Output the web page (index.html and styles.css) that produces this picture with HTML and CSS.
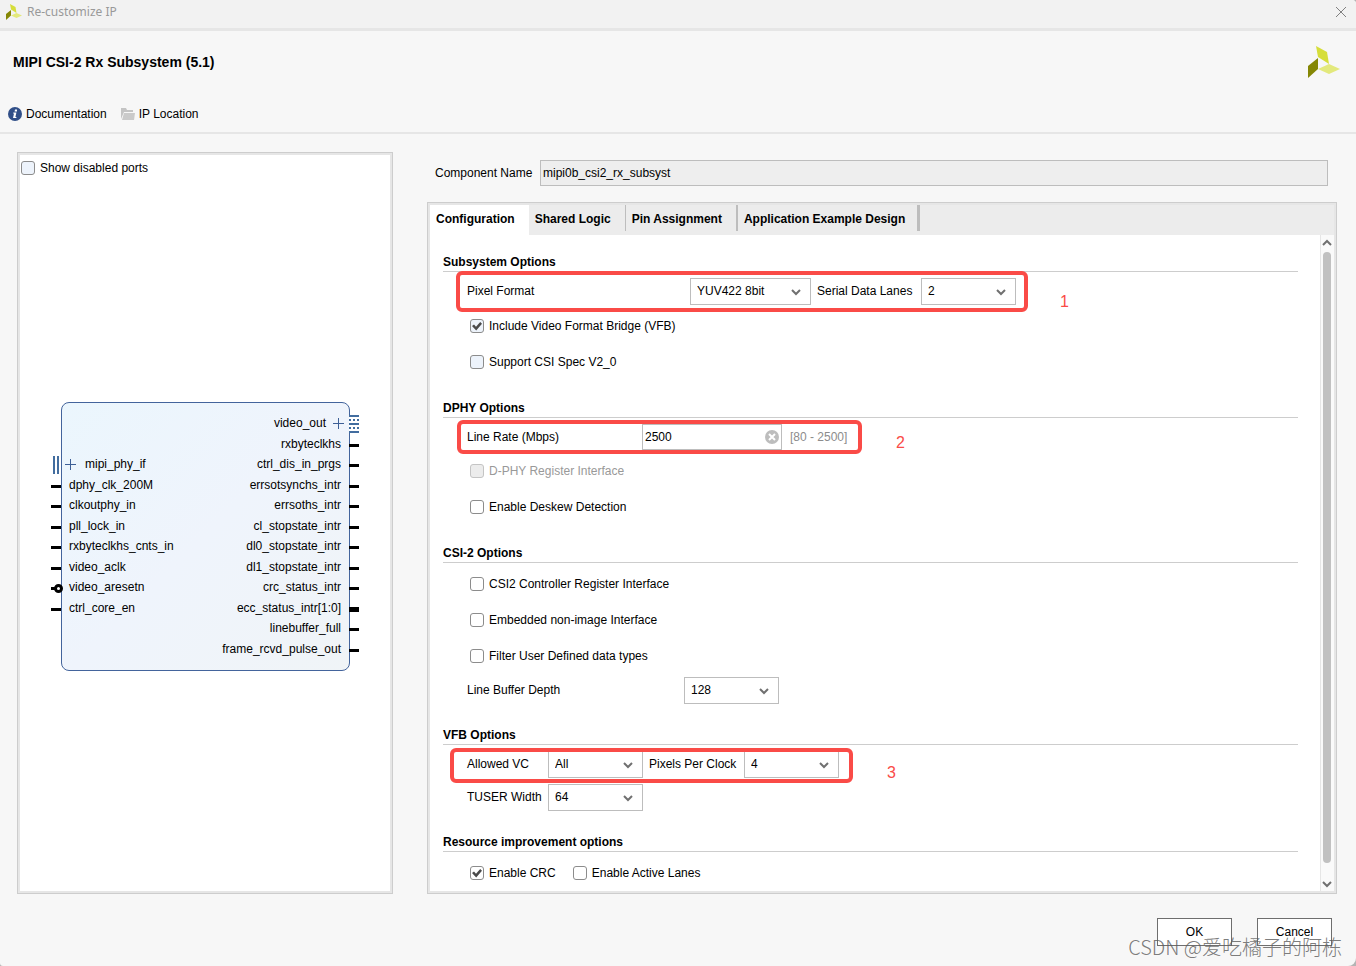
FILE: index.html
```html
<!DOCTYPE html>
<html lang="en">
<head>
    <meta charset="UTF-8">
    <title>Re-customize IP</title>
    <meta name="viewport" content="width=device-width, initial-scale=1.0">
    <link rel="stylesheet" href="styles.css">
</head>
<body>
    <svg class="symbols" aria-hidden="true">
        <symbol id="logo" viewBox="0 0 32 32">
            <path fill="#d6de3a" d="M8 0l11 6 2 12-11-7z"/>
            <path fill="#858705" d="M0 20l10-8v11L0 32z"/>
            <path fill="#e3e97c" d="M10 23l11-5 11 5-11 5z"/>
        </symbol>
        <symbol id="chevron" viewBox="0 0 10 7">
            <path d="M1 1l4 4 4-4" fill="none" stroke="#707070" stroke-width="2"/>
        </symbol>
        <symbol id="plus" viewBox="0 0 11 11">
            <path d="M5.5 0v11M0 5.5h11" stroke="#3d5f96"/>
        </symbol>
    </svg>

    <div class="titlebar">
        <svg class="titlebar-logo"><use href="#logo"/></svg>
        <span>Re-customize IP</span>
        <button class="close" aria-label="Close">
            <svg width="10" height="10" viewBox="0 0 10 10"><path d="M0 0l10 10M10 0L0 10" stroke="#808080"/></svg>
        </button>
    </div>

    <header class="header">
        <div class="header-top">
            <h1>MIPI CSI-2 Rx Subsystem (5.1)</h1>
            <svg class="header-logo"><use href="#logo"/></svg>
        </div>
        <nav class="links">
            <a href="#">
                <svg width="14" height="14" viewBox="0 0 14 14">
                    <circle cx="7" cy="7" r="7" fill="#314f88"/>
                    <path d="M7 2.500h2v2H6.600zM5.400 5.500h3l-1 4.500h1v1H5l1-4.500h-1z" fill="#fff"/>
                </svg>
                Documentation
            </a>
            <a href="#">
                <svg width="14" height="12" viewBox="0 0 14 12">
                    <path d="M0 0h5l1 2h6v2H3L0 11z" fill="#c4c4c4"/>
                    <path d="M3 5h11l-1 7H1z" fill="#cacaca"/>
                </svg>
                IP Location
            </a>
        </nav>
    </header>

    <main class="main">
        <section class="preview">
            <label class="check"><input type="checkbox" class="tinted">Show disabled ports</label>
            <div class="diagram">
                <div class="block">
                    <ul class="ports ports-in">
                        <li class="bus"><svg class="plus"><use href="#plus"/></svg>mipi_phy_if</li>
                        <li>dphy_clk_200M</li>
                        <li>clkoutphy_in</li>
                        <li>pll_lock_in</li>
                        <li>rxbyteclkhs_cnts_in</li>
                        <li>video_aclk</li>
                        <li class="inverted">video_aresetn</li>
                        <li>ctrl_core_en</li>
                    </ul>
                    <ul class="ports ports-out">
                        <li class="bus">video_out<svg class="plus"><use href="#plus"/></svg></li>
                        <li>rxbyteclkhs</li>
                        <li>ctrl_dis_in_prgs</li>
                        <li>errsotsynchs_intr</li>
                        <li>errsoths_intr</li>
                        <li>cl_stopstate_intr</li>
                        <li>dl0_stopstate_intr</li>
                        <li>dl1_stopstate_intr</li>
                        <li>crc_status_intr</li>
                        <li class="wide">ecc_status_intr[1:0]</li>
                        <li>linebuffer_full</li>
                        <li>frame_rcvd_pulse_out</li>
                    </ul>
                </div>
            </div>
        </section>

        <section class="config">
            <div class="component">
                <label for="component-name">Component Name</label>
                <input id="component-name" type="text" value="mipi0b_csi2_rx_subsyst" readonly>
            </div>

            <div class="panel">
                <div class="tabs" role="tablist">
                    <button class="tab active" role="tab" aria-selected="true">Configuration</button>
                    <button class="tab" role="tab">Shared Logic</button>
                    <button class="tab" role="tab">Pin Assignment</button>
                    <button class="tab" role="tab">Application Example Design</button>
                </div>

                <div class="scroll">
                    <form class="options">
                        <fieldset>
                            <h2>Subsystem Options</h2>
                            <div class="field subsystem">
                                <label for="pixel-format">Pixel Format</label>
                                <span class="select wide">
                                    <select id="pixel-format"><option>YUV422 8bit</option></select>
                                    <svg><use href="#chevron"/></svg>
                                </span>
                                <label for="lanes" class="lanes">Serial Data Lanes</label>
                                <span class="select">
                                    <select id="lanes"><option>2</option></select>
                                    <svg><use href="#chevron"/></svg>
                                </span>
                                <span class="mark mark-1"></span>
                                <span class="mark-number number-1">1</span>
                            </div>
                            <div class="checks"><label class="check"><input type="checkbox" class="tinted" checked>Include Video Format Bridge (VFB)</label></div>
                            <div class="checks"><label class="check"><input type="checkbox" class="tinted">Support CSI Spec V2_0</label></div>
                        </fieldset>

                        <fieldset>
                            <h2>DPHY Options</h2>
                            <div class="field dphy">
                                <label for="line-rate">Line Rate (Mbps)</label>
                                <span class="text">
                                    <input id="line-rate" type="text" value="2500">
                                    <button type="button" class="clear" aria-label="Clear">
                                        <svg width="14" height="14" viewBox="0 0 14 14">
                                            <circle cx="7" cy="7" r="7" fill="#bdbdbd"/>
                                            <path d="M4 4l6 6M10 4l-6 6" stroke="#fff" stroke-width="2"/>
                                        </svg>
                                    </button>
                                </span>
                                <span class="range">[80 - 2500]</span>
                                <span class="mark mark-2"></span>
                                <span class="mark-number number-2">2</span>
                            </div>
                            <div class="checks"><label class="check disabled"><input type="checkbox" disabled>D-PHY Register Interface</label></div>
                            <div class="checks"><label class="check"><input type="checkbox">Enable Deskew Detection</label></div>
                        </fieldset>

                        <fieldset>
                            <h2>CSI-2 Options</h2>
                            <div class="checks"><label class="check"><input type="checkbox">CSI2 Controller Register Interface</label></div>
                            <div class="checks"><label class="check"><input type="checkbox">Embedded non-image Interface</label></div>
                            <div class="checks"><label class="check"><input type="checkbox">Filter User Defined data types</label></div>
                            <div class="field csi">
                                <label for="buffer-depth">Line Buffer Depth</label>
                                <span class="select">
                                    <select id="buffer-depth"><option>128</option></select>
                                    <svg><use href="#chevron"/></svg>
                                </span>
                            </div>
                        </fieldset>

                        <fieldset>
                            <h2>VFB Options</h2>
                            <div class="field vfb">
                                <label for="allowed-vc">Allowed VC</label>
                                <span class="select">
                                    <select id="allowed-vc"><option>All</option></select>
                                    <svg><use href="#chevron"/></svg>
                                </span>
                                <label for="pixels-clock" class="pixels">Pixels Per Clock</label>
                                <span class="select">
                                    <select id="pixels-clock"><option>4</option></select>
                                    <svg><use href="#chevron"/></svg>
                                </span>
                                <span class="mark mark-3"></span>
                                <span class="mark-number number-3">3</span>
                            </div>
                            <div class="field vfb">
                                <label for="tuser-width">TUSER Width</label>
                                <span class="select">
                                    <select id="tuser-width"><option>64</option></select>
                                    <svg><use href="#chevron"/></svg>
                                </span>
                            </div>
                        </fieldset>

                        <fieldset>
                            <h2>Resource improvement options</h2>
                            <div class="checks">
                                <label class="check"><input type="checkbox" checked>Enable CRC</label>
                                <label class="check"><input type="checkbox">Enable Active Lanes</label>
                            </div>
                        </fieldset>
                    </form>
                    <div class="scrollbar">
                        <svg class="up"><use href="#chevron"/></svg>
                        <div class="thumb"></div>
                        <svg><use href="#chevron"/></svg>
                    </div>
                </div>
            </div>
        </section>
    </main>

    <footer class="footer">
        <button>OK</button>
        <button>Cancel</button>
    </footer>
    <div class="watermark">CSDN @爱吃橘子的阿栋</div>
</body>
</html>
```
FILE: styles.css
```css
*,
*::before,
*::after {
    box-sizing: border-box;
}

html {
    background: #b4b4b4;
}

body {
    position: relative;
    display: flex;
    flex-direction: column;
    min-height: 100vh;
    margin: 0;
    background: #f7f7f7;
    border-radius: 0 4px 8px 3px;
    overflow: hidden;
    color: #000;
    font: 12px/16px "Liberation Sans", Arial, sans-serif;
}

button,
input,
select {
    margin: 0;
    color: inherit;
    font: inherit;
}

.symbols {
    position: absolute;
    width: 0;
    height: 0;
}

/* title bar */
.titlebar {
    display: flex;
    align-items: center;
    height: 31px;
    padding: 0 10px 4px 6px;
    border-bottom: 3px solid #e6e6e6;
    background: #f2f2f2;
    color: #999;
    font-family: "Noto Sans", "Open Sans", sans-serif;
}

.titlebar-logo {
    width: 16px;
    height: 16px;
    margin-right: 5px;
}

.close {
    display: flex;
    margin-left: auto;
    padding: 0;
    border: none;
    background: none;
}

/* header */
.header {
    padding: 15px 16px 10px 8px;
    border-bottom: 2px solid #e6e6e6;
}

.header-top {
    display: flex;
    align-items: center;
    justify-content: space-between;
    padding-left: 5px;
}

.header-logo {
    width: 32px;
    height: 32px;
}

h1 {
    margin: 0;
    font-size: 14px;
    line-height: 16px;
}

.links {
    display: flex;
    gap: 14px;
    margin-top: 28px;
}

.links a {
    display: flex;
    align-items: center;
    gap: 4px;
    color: #000;
    text-decoration: none;
}

/* main area */
.main {
    flex: 1;
    display: grid;
    grid-template-columns: 376px 1fr;
    gap: 34px;
    padding: 18px 19px 0 17px;
}

.preview,
.panel {
    border: 1px solid #cdcdcd;
    background: #fff;
    box-shadow: inset 0 0 0 2px #e6e6e6;
}

.preview {
    display: flex;
    flex-direction: column;
    padding: 7px 2px 2px 3px;
}

.check {
    display: flex;
    align-items: center;
    gap: 5px;
}

.check.disabled {
    color: #999;
}

.check input {
    appearance: none;
    position: relative;
    width: 14px;
    height: 14px;
    border: 1px solid #8c8c8c;
    border-radius: 3px;
    background: #fff;
}

.check .tinted {
    background: #edf3fb;
}

.check input:disabled {
    border-color: #c4c4c4;
    background: #ececec;
}

.check input:checked::before {
    content: "";
    position: absolute;
    inset: 1px;
    background: #4a4a4a;
    clip-path: polygon(0 50%, 20% 35%, 40% 58%, 82% 10%, 100% 28%, 42% 95%);
}

/* block symbol */
.diagram {
    flex: 1;
    display: flex;
    align-items: center;
    justify-content: center;
    padding-top: 6px;
}

.block {
    display: flex;
    justify-content: space-between;
    width: 289px;
    padding: 10px 8px 11px 7px;
    border: 1px solid #43649c;
    border-radius: 8px;
    background: linear-gradient(135deg, #ebf6fd, #eff4fc 50%, #f0f4f7);
}

.ports {
    display: grid;
    grid-template-rows: repeat(12, 1fr);
    height: 246px;
    margin: 0;
    padding: 0;
    list-style: none;
}

.ports li {
    position: relative;
    display: flex;
    align-items: center;
}

.ports-out li {
    justify-content: flex-end;
}

/* inputs start level with the third output */
.ports-in {
    grid-template-rows: repeat(8, 1fr);
    height: 164px;
    margin-top: 41px;
}

.ports li::before {
    content: "";
    position: absolute;
    top: 10px;
    width: 10px;
    height: 3px;
    background: #000;
}

.ports-in li::before {
    left: -18px;
}

.ports-out li::before {
    right: -18px;
}

.ports .wide::before {
    top: 9px;
    height: 5px;
}

.ports .bus::before {
    top: 2px;
    height: 18px;
}

.ports-in .bus::before {
    left: -16px;
    width: 6px;
    background: linear-gradient(to right, #426d9f 2px, #fff 2px, #fff 4px, #426d9f 4px);
}

.ports-out .bus::before {
    background:
        repeating-linear-gradient(to right, #426d9f 0, #426d9f 2px, #fff 2px, #fff 4px) 0 4px / 10px 2px no-repeat,
        repeating-linear-gradient(to right, #426d9f 0, #426d9f 2px, #fff 2px, #fff 4px) 0 12px / 10px 2px no-repeat,
        repeating-linear-gradient(to bottom, #426d9f 0, #426d9f 2px, #fff 2px, #fff 8px);
}

.plus {
    width: 11px;
    height: 11px;
}

.ports-in .plus {
    margin: 0 9px 0 -4px;
}

.ports-out .plus {
    margin: 0 -3px 0 7px;
}

.ports .inverted::after {
    content: "";
    position: absolute;
    top: 7px;
    left: -15px;
    width: 9px;
    height: 9px;
    border: 3px solid #000;
    border-radius: 50%;
    background: #fff;
}

/* configuration */
.config {
    display: flex;
    flex-direction: column;
    padding-top: 8px;
}

.component {
    display: flex;
    align-items: center;
    gap: 5px;
    margin-bottom: 16px;
    padding: 0 9px 0 8px;
}

.component label {
    min-width: 100px;
}

.component input {
    flex: 1;
    height: 26px;
    padding: 0 2px;
    border: 1px solid #bdbdbd;
    background: #eee;
}

.panel {
    flex: 1;
    display: flex;
    flex-direction: column;
    padding: 2px;
}

.tabs {
    display: flex;
    align-items: flex-start;
    height: 30px;
    background: #ececec;
}

.tab {
    height: 26px;
    padding: 2px 14px 0 6px;
    border: none;
    border-right: 1px solid #bdbdbd;
    background: none;
    font-weight: bold;
}

.tab:nth-child(3) {
    border-right-width: 2px;
}

.tab:nth-child(4) {
    padding-right: 12px;
    border-right-width: 3px;
}

.tab.active {
    height: 30px;
    padding-bottom: 4px;
    border: none;
    background: #fff;
}

.scroll {
    flex: 1;
    display: flex;
}

.options {
    flex: 1;
    padding: 19px 22px 0 13px;
}

fieldset {
    min-width: 0;
    margin: 0 0 20px;
    padding: 0;
    border: none;
}

fieldset:last-child {
    margin-bottom: 0;
}

h2 {
    height: 18px;
    margin: 0 0 3px;
    border-bottom: 1px solid #cdcdcd;
    font-size: 12px;
    line-height: 16px;
}

.field {
    position: relative;
    display: flex;
    align-items: center;
    gap: 6px;
    margin: 6px 0 6px 24px;
}

.field + .checks {
    margin-top: -3px;
}

.checks + .field {
    margin-top: 3px;
}

.field:last-child {
    margin-bottom: 3px;
}

.field label {
    padding-bottom: 2px;
}

.subsystem label:first-child {
    width: 217px;
}

.dphy label {
    width: 169px;
    padding-bottom: 0;
}

.csi label {
    width: 211px;
}

.vfb label:first-child {
    width: 75px;
}

.lanes {
    width: 98px;
}

.pixels {
    width: 89px;
}

.select {
    position: relative;
    display: flex;
    width: 95px;
}

.select.wide {
    width: 121px;
}

.select select {
    appearance: none;
    width: 100%;
    height: 27px;
    padding: 0 6px 2px;
    border: 1px solid #bdbdbd;
    border-radius: 0;
    background: #fff;
}

.select svg {
    position: absolute;
    top: 11px;
    right: 10px;
    width: 10px;
    height: 7px;
    pointer-events: none;
}

.text {
    position: relative;
    display: flex;
    width: 140px;
}

.text input {
    width: 100%;
    height: 26px;
    padding: 0 20px 0 2px;
    border: 1px solid #bdbdbd;
}

.clear {
    position: absolute;
    top: 6px;
    right: 3px;
    display: flex;
    padding: 0;
    border: none;
    background: none;
}

.range {
    padding-left: 2px;
    color: #8c8c8c;
}

.checks {
    display: flex;
    align-items: center;
    gap: 17px;
    height: 36px;
    padding-left: 27px;
}

/* red callouts over the form */
.mark {
    position: absolute;
    border: 4px solid #fa4b47;
    border-radius: 6px;
    pointer-events: none;
}

.mark-1 {
    top: -7px;
    left: -11px;
    width: 572px;
    height: 41px;
}

.mark-2 {
    top: -4px;
    left: -10px;
    width: 405px;
    height: 34px;
}

.mark-3 {
    top: -3px;
    left: -17px;
    width: 403px;
    height: 35px;
}

.mark-number {
    position: absolute;
    top: 14px;
    color: #fa4b47;
    font-size: 16px;
    line-height: 20px;
}

.number-1 {
    left: 593px;
}

.number-2 {
    top: 9px;
    left: 429px;
}

.number-3 {
    top: 12px;
    left: 420px;
}

.scrollbar {
    display: flex;
    flex-direction: column;
    align-items: center;
    gap: 6px;
    width: 14px;
    padding: 4px 2px 3px 0;
    border-left: 1px solid #e6e6e6;
    background: #fafafa;
}

.scrollbar svg {
    width: 10px;
    height: 7px;
}

.scrollbar .up {
    transform: rotate(180deg);
}

.thumb {
    flex: 1;
    width: 8px;
    margin-bottom: 12px;
    border-radius: 4px;
    background: #c1c1c1;
}

/* footer */
.footer {
    display: flex;
    justify-content: flex-end;
    gap: 25px;
    padding: 24px 24px 20px;
}

.footer button {
    width: 75px;
    height: 28px;
    padding: 0;
    border: 1px solid #6e6e6e;
    background: #fff;
}

.watermark {
    position: absolute;
    right: 14px;
    bottom: 7px;
    color: rgba(90, 90, 90, 0.8);
    font-family: "Noto Sans CJK SC", sans-serif;
    font-size: 20px;
    font-weight: 300;
    line-height: 24px;
    pointer-events: none;
}
```
